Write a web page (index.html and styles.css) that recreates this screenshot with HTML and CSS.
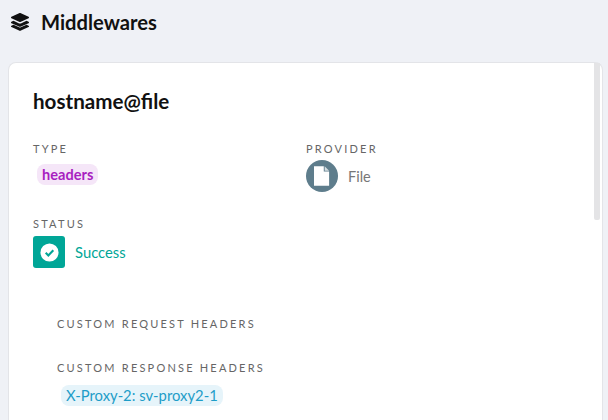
FILE: index.html
```html
<!DOCTYPE html>
<html lang="en">
<head>
<meta charset="utf-8">
<title>Middlewares</title>
<link rel="stylesheet" href="styles.css">
</head>
<body>
<header class="page-header">
  <svg class="layers-icon" viewBox="0 0 512 512" width="18" height="18" aria-hidden="true"><path fill="#111" d="M12.4 148l232.9 105.700c6.800 3.100 14.500 3.100 21.300 0L499.600 148c16.500-7.500 16.500-32.500 0-40L266.700 2.300c-6.800-3.100-14.500-3.100-21.300 0L12.400 108c-16.500 7.500-16.500 32.500 0 40zM499.600 249.100l-58.100-26.300-161.600 73.200c-7.600 3.400-15.600 5.200-23.900 5.200s-16.300-1.700-23.900-5.200L70.500 222.800l-58.100 26.300c-16.500 7.500-16.500 32.500 0 40l232.900 105.500c6.800 3.100 14.500 3.100 21.300 0l233-105.500c16.500-7.500 16.500-32.500 0-40zM499.600 360.700l-57.900-26.200-161.800 73.300c-7.600 3.400-15.600 5.200-23.900 5.200s-16.300-1.700-23.900-5.200L70.300 334.500l-57.900 26.200c-16.500 7.500-16.500 32.500 0 40l232.900 105.600c6.800 3.100 14.500 3.100 21.300 0l233-105.600c16.500-7.500 16.500-32.500 0-40z"/></svg>
  <h1 class="page-title">Middlewares</h1>
</header>
<main class="card">
  <h2 class="card-title">hostname@file</h2>
  <div class="grid">
    <section class="field">
      <div class="label">TYPE</div>
      <div class="field-body"><span class="chip chip-purple">headers</span></div>
    </section>
    <section class="field">
      <div class="label">PROVIDER</div>
      <div class="value-row">
        <span class="provider-avatar">
          <svg viewBox="0 0 18 22" width="16" height="20" aria-hidden="true"><path fill="#fff" d="M0 0h11v6h6v16H0z"/><path fill="#fff" opacity=".75" d="M12 0l5 5h-5z"/></svg>
        </span>
        <span class="provider-name">File</span>
      </div>
    </section>
    <section class="field field-status">
      <div class="label">STATUS</div>
      <div class="value-row">
        <span class="status-box">
          <svg viewBox="0 0 20 20" width="19" height="19" aria-hidden="true"><circle cx="10" cy="10" r="9.500" fill="#fff"/><path d="M6 10.300l2.800 2.800L14 7.600" fill="none" stroke="#00a697" stroke-width="2.200"/></svg>
        </span>
        <span class="status-text">Success</span>
      </div>
    </section>
  </div>
  <div class="details">
    <section class="detail">
      <div class="label">CUSTOM REQUEST HEADERS</div>
    </section>
    <section class="detail">
      <div class="label">CUSTOM RESPONSE HEADERS</div>
      <div class="field-body"><span class="chip chip-blue">X-Proxy-2: sv-proxy2-1</span></div>
    </section>
  </div>
  <div class="scrollbar"></div>
</main>
</body>
</html>
```
FILE: styles.css
```css
* { box-sizing: border-box; }
html, body { height: 100%; }
body {
  margin: 0;
  padding: 0 5px 0 8px;
  overflow: hidden;
  background: #eff1f6;
  color: #111;
  font-family: "Lato", "Noto Sans", sans-serif;
}
.page-header {
  display: flex;
  align-items: center;
  gap: 12px;
  height: 44px;
  padding-left: 3px;
}
.page-title { margin: 0; font-size: 20.2px; line-height: 1; font-weight: 700; }
.layers-icon { display: block; }
.card {
  position: relative;
  margin-top: 18px;
  height: 358px;
  padding: 26px 24px 0;
  background: #fff;
  border: 1px solid #e3e4e8;
  border-bottom: 0;
  border-radius: 8px 8px 0 0;
}
.card-title { margin: 0 0 29px; font-size: 20.6px; line-height: 24px; font-weight: 700; }
.grid {
  display: grid;
  grid-template-columns: 273px 1fr;
  row-gap: 25px;
}
.label {
  font-size: 11px;
  line-height: 14px;
  letter-spacing: 2.2px;
  color: #666;
}
.field-body { padding: 8px 0 0 4px; }
.detail .field-body { padding-top: 10px; }
.chip {
  display: inline-block;
  height: 21px;
  padding: 0 5px;
  border-radius: 8px;
  font-size: 14px;
  line-height: 21px;
}
.chip-purple { background: #f5e6f8; color: #a81fc0; font-weight: 700; font-size: 14.6px; }
.chip-blue { background: #e6f4fa; color: #1e9dc8; font-size: 14.8px; }
.value-row { display: flex; align-items: center; gap: 10px; min-height: 32px; margin-top: 4px; }
.field-status .value-row { margin-top: 5px; }
.provider-avatar {
  display: flex;
  align-items: center;
  justify-content: center;
  width: 32px;
  height: 32px;
  border-radius: 50%;
  background: #5e7d8c;
}
.provider-name { font-size: 14.500px; color: #777; }
.status-box {
  display: flex;
  align-items: center;
  justify-content: center;
  width: 32px;
  height: 32px;
  border-radius: 3px;
  background: #00a697;
}
.status-text { font-size: 14.800px; color: #00a697; }
.details { padding: 49px 0 0 24px; display: flex; flex-direction: column; gap: 30px; }
.scrollbar {
  position: absolute;
  top: 0;
  right: 2px;
  width: 6px;
  height: 157px;
  border-radius: 0 0 2px 2px;
  background: #e4e4e6;
}
```
